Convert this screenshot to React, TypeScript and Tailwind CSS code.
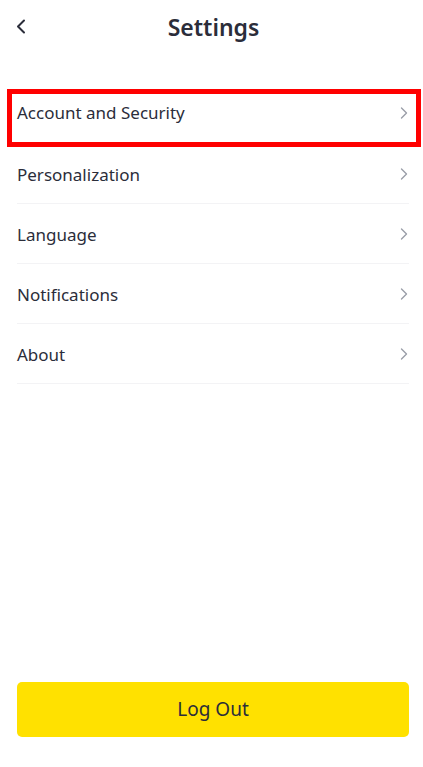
import React from "react";

const items = ["Account and Security", "Personalization", "Language", "Notifications", "About"];

function Chevron() {
  return (
    <svg width="8" height="12" viewBox="0 0 8 12" fill="none" className="shrink-0">
      <path d="M1.5 1l5 5-5 5" stroke="#9a9ea8" strokeWidth="1.4" strokeLinecap="round" strokeLinejoin="round" />
    </svg>
  );
}

export default function App() {
  return (
    <div
      className="relative w-[423px] h-[767px] bg-white flex flex-col text-[#2b2d3a]"
      style={{ fontFamily: '"Noto Sans", "Open Sans", sans-serif' }}
    >
      <div className="relative h-[56px] flex items-center justify-center">
        <svg width="10" height="15" viewBox="0 0 10 15" fill="none" className="absolute left-[16px] top-[19px]">
          <path d="M8 1.5L2 7.5l6 6" stroke="#2b2d3a" strokeWidth="2" strokeLinecap="round" strokeLinejoin="round" />
        </svg>
        <h1 className="text-[23px] font-semibold leading-none pl-[4px] pb-[2px]">Settings</h1>
      </div>
      <div className="mt-[28px] flex flex-col pl-[17px] pr-[14px]">
        {items.map((t, i) => (
          <div
            key={t}
            className={
              i === 0
                ? "h-[60px] flex items-center justify-between border-b border-[#f3f3f5] pr-[1px] pb-[2px]"
                : "h-[60px] flex items-center justify-between border-b border-[#f3f3f5] pr-[1px] pt-[1px]"
            }
          >
            <span className="text-[17px] leading-none">{t}</span>
            <Chevron />
          </div>
        ))}
      </div>
      <div className="mt-auto pl-[17px] pr-[14px] pb-[30px]">
        <button className="w-full h-[55px] rounded-[5px] bg-[#ffe100] text-[19px] text-[#2b2d3a] flex items-center justify-center">
          Log Out
        </button>
      </div>
      <div className="absolute left-[7px] top-[89px] w-[414px] h-[58px] border-[5px] border-[#ff0000]" />
    </div>
  );
}
